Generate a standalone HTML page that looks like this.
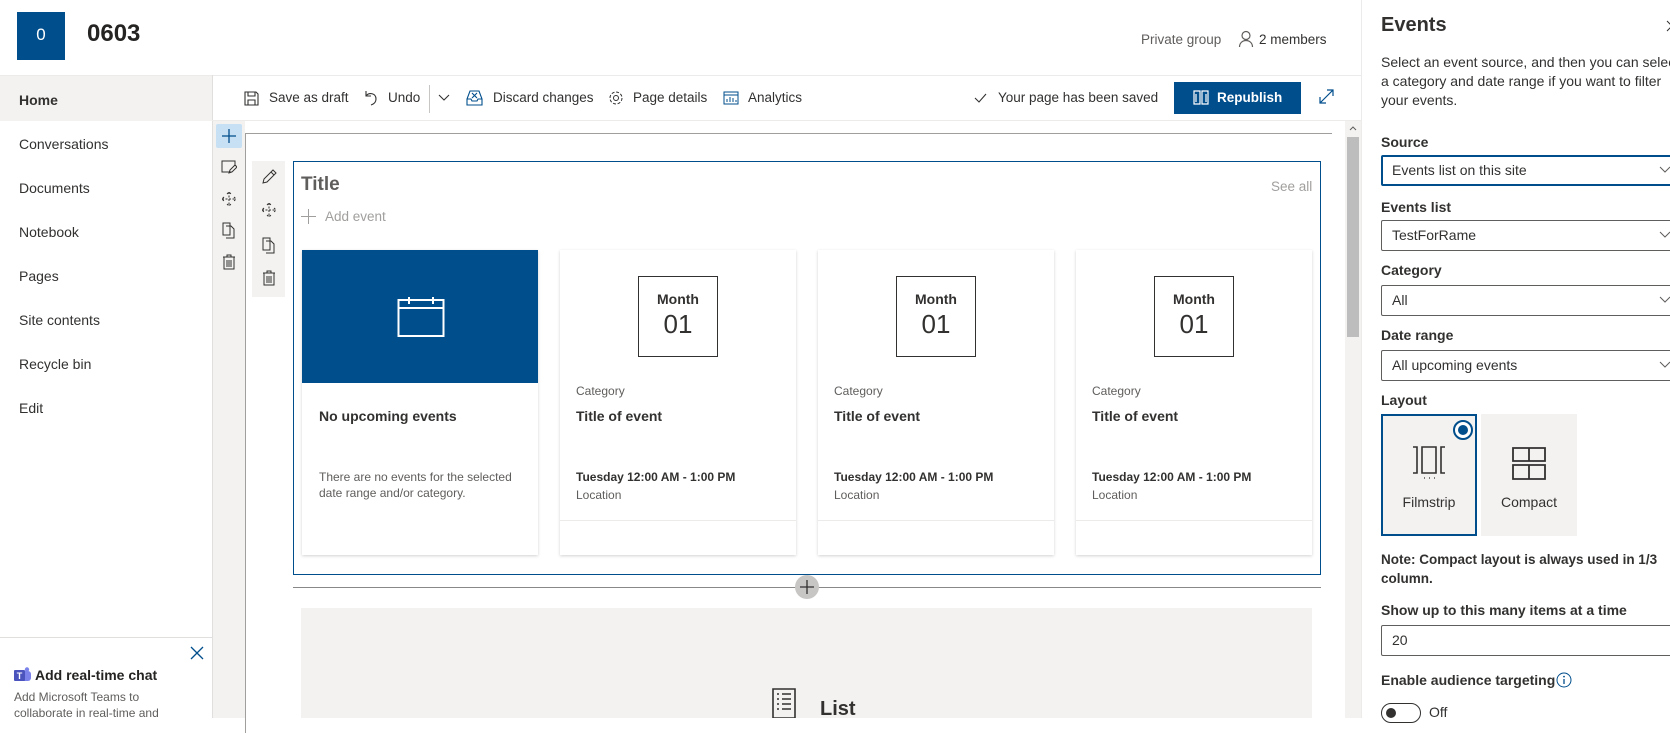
<!DOCTYPE html>
<html><head><meta charset="utf-8"><style>
*{box-sizing:border-box;margin:0;padding:0}
body{width:1670px;height:718px;overflow:hidden;background:#fff;font-family:"Liberation Sans",sans-serif;color:#323130;position:relative}
.a{position:absolute;white-space:nowrap}
.nav{font-size:14px;left:19px}
.tb{font-size:13.5px;top:90px}
.lbl{font-size:14px;font-weight:bold;left:1381px}
.dd{position:absolute;left:1381px;width:300px;height:31px;border:1px solid #605e5c;border-radius:2px;font-size:14px;padding:6px 10px}
.card{position:absolute;top:250px;width:236px;height:305px;background:#fff;box-shadow:0 1px 3px rgba(0,0,0,.18)}
.card .foot{position:absolute;left:0;right:0;top:270px;border-top:1px solid #edebe9}
.db{position:absolute;left:78px;top:26px;width:80px;height:81px;border:1px solid #323130;text-align:center}
.ic{position:absolute}
</style></head><body>
<div class="a" style="left:17px;top:12px;width:48px;height:48px;background:#004e8c;color:#fff;font-size:17px;text-align:center;line-height:46px">0</div>
<div class="a" style="left:87px;top:20px;font-size:24px;font-weight:bold;color:#252423">0603</div>
<div class="a" style="left:1141px;top:32px;font-size:13.5px;color:#605e5c">Private group</div>
<svg class="ic" style="left:1238px;top:30px" width="16" height="18" viewBox="0 0 16 18"><circle cx="8" cy="5.5" r="4" fill="none" stroke="#605e5c" stroke-width="1.2"/><path d="M1.5 17c0-4 3-6.5 6.5-6.5s6.5 2.5 6.5 6.5" fill="none" stroke="#605e5c" stroke-width="1.2"/></svg>
<div class="a" style="left:1259px;top:32px;font-size:13.5px;color:#323130">2 members</div>
<div class="a" style="left:0;top:75px;width:1361px;border-top:1px solid #edebe9"></div>
<div class="a" style="left:0;top:76px;width:212px;height:45px;background:#f3f2f1"></div>
<div class="a" style="left:212px;top:75px;height:643px;border-left:1px solid #e1dfdd"></div>
<div class="a nav" style="top:92px;font-weight:bold">Home</div>
<div class="a nav" style="top:136px">Conversations</div>
<div class="a nav" style="top:180px">Documents</div>
<div class="a nav" style="top:224px">Notebook</div>
<div class="a nav" style="top:268px">Pages</div>
<div class="a nav" style="top:312px">Site contents</div>
<div class="a nav" style="top:356px">Recycle bin</div>
<div class="a nav" style="top:400px">Edit</div>
<div class="a" style="left:0;top:637px;width:212px;border-top:1px solid #e1dfdd"></div>
<svg class="ic" style="left:190px;top:646px" width="14" height="14" viewBox="0 0 14 14"><path d="M1 1L13 13M13 1L1 13" stroke="#004e8c" stroke-width="1.3"/></svg>
<svg class="ic" style="left:13px;top:667px" width="20" height="18" viewBox="0 0 20 18"><rect x="8" y="4" width="10" height="10" rx="3" fill="#7b83eb"/><circle cx="14" cy="2.5" r="2.2" fill="#7b83eb"/><rect x="1" y="3" width="11" height="11" rx="1" fill="#4b53bc"/><text x="6.5" y="12" font-size="9" fill="#fff" text-anchor="middle" font-family="Liberation Sans" font-weight="bold">T</text></svg>
<div class="a" style="left:35px;top:667px;font-size:14px;font-weight:bold;color:#252423">Add real-time chat</div>
<div class="a" style="left:14px;top:690px;font-size:12px;color:#605e5c">Add Microsoft Teams to</div>
<div class="a" style="left:14px;top:706px;font-size:12px;color:#605e5c">collaborate in real-time and</div>
<div class="a" style="left:212px;top:120px;width:1149px;border-top:1px solid #edebe9"></div>
<svg class="ic" style="left:244px;top:91px" width="15" height="15" viewBox="0 0 15 15"><path d="M1 1h11l2 2v11H1z M4 1v4h7V1 M4 14V9h7v5" fill="none" stroke="#323130" stroke-width="1.1"/></svg>
<div class="a tb" style="left:269px">Save as draft</div>
<svg class="ic" style="left:364px;top:90px" width="14" height="16" viewBox="0 0 14 16"><path d="M2 1v5h5M2 6c3-4 10-3 10 3 0 3-2 5-5 6" fill="none" stroke="#323130" stroke-width="1.1"/></svg>
<div class="a tb" style="left:388px">Undo</div>
<div class="a" style="left:429px;top:85px;height:28px;border-left:1px solid #c8c6c4"></div>
<svg class="ic" style="left:438px;top:94px" width="12" height="8" viewBox="0 0 12 8"><path d="M1 1l5 5 5-5" fill="none" stroke="#323130" stroke-width="1.1"/></svg>
<svg class="ic" style="left:466px;top:90px" width="17" height="16" viewBox="0 0 17 16"><path d="M1 9v6h15V9l-3-8H4z M1 9h4l1 2h5l1-2h4 M6 3l5 5M11 3L6 8" fill="none" stroke="#004e8c" stroke-width="1.1"/></svg>
<div class="a tb" style="left:493px">Discard changes</div>
<svg class="ic" style="left:608px;top:90px" width="16" height="16" viewBox="0 0 16 16"><circle cx="8" cy="8" r="2.5" fill="none" stroke="#323130"/><circle cx="8" cy="8" r="6" fill="none" stroke="#323130" stroke-dasharray="3 1.7"/></svg>
<div class="a tb" style="left:633px">Page details</div>
<svg class="ic" style="left:723px;top:91px" width="16" height="14" viewBox="0 0 16 14"><rect x="1" y="1" width="14" height="12" fill="none" stroke="#004e8c"/><path d="M1 4h14M4 11V8M7 11V6M10 11V7M13 11V9" stroke="#004e8c"/></svg>
<div class="a tb" style="left:748px">Analytics</div>
<svg class="ic" style="left:974px;top:93px" width="13" height="10" viewBox="0 0 13 10"><path d="M1 5l4 4 7-8" fill="none" stroke="#323130" stroke-width="1.1"/></svg>
<div class="a tb" style="left:998px">Your page has been saved</div>
<div class="a" style="left:1174px;top:82px;width:127px;height:32px;background:#004e8c;color:#fff;font-size:13.5px;font-weight:bold;padding-left:43px;line-height:32px">Republish</div>
<svg class="ic" style="left:1193px;top:90px" width="16" height="15" viewBox="0 0 16 15"><path d="M1 1h6v13H1z M9 1h6v13H9z M3 4v8M13 4v8" fill="none" stroke="#fff" stroke-width="1.2"/></svg>
<svg class="ic" style="left:1318px;top:88px" width="17" height="17" viewBox="0 0 17 17"><path d="M2 15L15 2M9 2h6v6M2 9v6h6" fill="none" stroke="#004e8c" stroke-width="1.2"/></svg>
<div class="a" style="left:213px;top:121px;width:32px;height:597px;background:#f3f2f1"></div>
<div class="a" style="left:216px;top:124px;width:26px;height:24px;background:#c7e0f4;border-radius:2px"></div>
<svg class="ic" style="left:221px;top:128px" width="16" height="16" viewBox="0 0 16 16"><path d="M8 1v14M1 8h14" stroke="#004e8c" stroke-width="1.3"/></svg>
<svg class="ic" style="left:221px;top:160px" width="16" height="15" viewBox="0 0 16 15"><path d="M11 12H1V1h13v5 M8 13l1-3 5-5 2 2-5 5z" fill="none" stroke="#323130"/></svg>
<svg class="ic" style="left:221px;top:191px" width="16" height="16" viewBox="0 0 16 16"><path d="M8 1v14M1 8h14M6 3l2-2 2 2M6 13l2 2 2-2M3 6L1 8l2 2M13 6l2 2-2 2" fill="none" stroke="#323130" stroke-dasharray="2 1.5"/></svg>
<svg class="ic" style="left:222px;top:222px" width="14" height="17" viewBox="0 0 14 17"><path d="M1 1h7v12H1z M4 4h5l3 3v9H4" fill="none" stroke="#323130"/></svg>
<svg class="ic" style="left:222px;top:254px" width="14" height="16" viewBox="0 0 14 16"><path d="M1 3h12M5 3V1h4v2M2 3v12h10V3M5 6v7M7 6v7M9 6v7" fill="none" stroke="#323130"/></svg>
<div class="a" style="left:245px;top:133px;width:1087px;height:600px;border:1px solid #a19f9d;border-right:none;border-bottom:none"></div>
<div class="a" style="left:1345px;top:121px;width:16px;height:597px;background:#f3f2f1"></div>
<div class="a" style="left:1347px;top:137px;width:12px;height:200px;background:#bdbdbd"></div>
<svg class="ic" style="left:1349px;top:125px" width="8" height="6" viewBox="0 0 8 6"><path d="M1 5l3-3 3 3" fill="none" stroke="#605e5c"/></svg>
<div class="a" style="left:252px;top:161px;width:33px;height:136px;background:#f3f2f1"></div>
<svg class="ic" style="left:261px;top:169px" width="16" height="16" viewBox="0 0 16 16"><path d="M2 14l1-4 9-9 3 3-9 9z M10 3l3 3" fill="none" stroke="#323130"/></svg>
<svg class="ic" style="left:261px;top:202px" width="16" height="16" viewBox="0 0 16 16"><path d="M8 1v14M1 8h14M6 3l2-2 2 2M6 13l2 2 2-2M3 6L1 8l2 2M13 6l2 2-2 2" fill="none" stroke="#323130" stroke-dasharray="2 1.5"/></svg>
<svg class="ic" style="left:262px;top:237px" width="14" height="17" viewBox="0 0 14 17"><path d="M1 1h7v12H1z M4 4h5l3 3v9H4" fill="none" stroke="#323130"/></svg>
<svg class="ic" style="left:262px;top:270px" width="14" height="16" viewBox="0 0 14 16"><path d="M1 3h12M5 3V1h4v2M2 3v12h10V3M5 6v7M7 6v7M9 6v7" fill="none" stroke="#323130"/></svg>
<div class="a" style="left:293px;top:161px;width:1028px;height:414px;border:1px solid #004e8c"></div>
<div class="a" style="left:301px;top:174px;font-size:19px;font-weight:bold;color:#605e5c">Title</div>
<div class="a" style="left:1271px;top:179px;font-size:13.5px;color:#a19f9d">See all</div>
<svg class="ic" style="left:301px;top:209px" width="15" height="15" viewBox="0 0 15 15"><path d="M7.5 0v15M0 7.5h15" stroke="#a19f9d"/></svg>
<div class="a" style="left:325px;top:209px;font-size:13.5px;color:#a19f9d">Add event</div>
<div class="card" style="left:302px">
<div style="position:absolute;left:0;top:0;width:236px;height:133px;background:#004e8c"></div>
<svg class="ic" style="left:95px;top:46px" width="48" height="42" viewBox="0 0 48 42"><rect x="1.5" y="4" width="45" height="36" fill="none" stroke="#fff" stroke-width="2"/><path d="M1.5 12h45M12 1v7M36 1v7" stroke="#fff" stroke-width="2"/></svg>
<div class="a" style="left:17px;top:158px;font-size:14px;font-weight:bold">No upcoming events</div>
<div class="a" style="left:17px;top:220px;font-size:12px;color:#605e5c">There are no events for the selected</div>
<div class="a" style="left:17px;top:236px;font-size:12px;color:#605e5c">date range and/or category.</div>
</div>
<div class="card" style="left:560px"><div class="db"><div style="font-size:14px;font-weight:bold;margin-top:14px">Month</div><div style="font-size:26px;margin-top:2px">01</div></div><div class="a" style="left:16px;top:134px;font-size:12px;color:#605e5c">Category</div><div class="a" style="left:16px;top:158px;font-size:14px;font-weight:bold">Title of event</div><div class="a" style="left:16px;top:220px;font-size:12px;font-weight:bold">Tuesday 12:00 AM - 1:00 PM</div><div class="a" style="left:16px;top:238px;font-size:12px;color:#605e5c">Location</div><div class="foot"></div></div>
<div class="card" style="left:818px"><div class="db"><div style="font-size:14px;font-weight:bold;margin-top:14px">Month</div><div style="font-size:26px;margin-top:2px">01</div></div><div class="a" style="left:16px;top:134px;font-size:12px;color:#605e5c">Category</div><div class="a" style="left:16px;top:158px;font-size:14px;font-weight:bold">Title of event</div><div class="a" style="left:16px;top:220px;font-size:12px;font-weight:bold">Tuesday 12:00 AM - 1:00 PM</div><div class="a" style="left:16px;top:238px;font-size:12px;color:#605e5c">Location</div><div class="foot"></div></div>
<div class="card" style="left:1076px"><div class="db"><div style="font-size:14px;font-weight:bold;margin-top:14px">Month</div><div style="font-size:26px;margin-top:2px">01</div></div><div class="a" style="left:16px;top:134px;font-size:12px;color:#605e5c">Category</div><div class="a" style="left:16px;top:158px;font-size:14px;font-weight:bold">Title of event</div><div class="a" style="left:16px;top:220px;font-size:12px;font-weight:bold">Tuesday 12:00 AM - 1:00 PM</div><div class="a" style="left:16px;top:238px;font-size:12px;color:#605e5c">Location</div><div class="foot"></div></div>
<div class="a" style="left:293px;top:587px;width:1028px;border-top:1px solid #8a8886"></div>
<div class="a" style="left:795px;top:575px;width:24px;height:24px;border-radius:50%;background:#c8c6c4"></div>
<svg class="ic" style="left:800px;top:580px" width="14" height="14" viewBox="0 0 14 14"><path d="M7 0v14M0 7h14" stroke="#323130" stroke-width="1.3"/></svg>
<div class="a" style="left:301px;top:608px;width:1011px;height:110px;background:#f3f2f1"></div>
<svg class="ic" style="left:772px;top:688px" width="24" height="30" viewBox="0 0 24 30"><path d="M1 1h22v29H1z M5 6h2M10 6h9M5 11h2M10 11h9M5 16h2M10 16h9M5 21h2M10 21h9" fill="none" stroke="#323130" stroke-width="1.6"/></svg>
<div class="a" style="left:820px;top:698px;font-size:20px;font-weight:bold;color:#323130">List</div>
<div class="a" style="left:1361px;top:0;height:718px;border-left:1px solid #edebe9"></div>
<div class="a" style="left:1381px;top:14px;font-size:20px;font-weight:bold;color:#323130">Events</div>
<svg class="ic" style="left:1666px;top:20px" width="10" height="12" viewBox="0 0 10 12"><path d="M1 1l10 10M11 1L1 11" stroke="#323130"/></svg>
<div class="a" style="left:1381px;top:53px;font-size:14px;line-height:19px;color:#323130">Select an event source, and then you can select<br>a category and date range if you want to filter<br>your events.</div>
<div class="a lbl" style="top:134px">Source</div>
<div class="dd" style="top:155px;border:2px solid #004e8c;padding:5px 9px">Events list on this site</div>
<div class="a lbl" style="top:199px">Events list</div>
<div class="dd" style="top:220px">TestForRame</div>
<div class="a lbl" style="top:262px">Category</div>
<div class="dd" style="top:285px">All</div>
<div class="a lbl" style="top:327px">Date range</div>
<div class="dd" style="top:350px">All upcoming events</div>
<svg class="ic" style="left:1659px;top:166px" width="12" height="8" viewBox="0 0 12 8"><path d="M1 1l5 5 5-5" fill="none" stroke="#605e5c"/></svg>
<svg class="ic" style="left:1659px;top:231px" width="12" height="8" viewBox="0 0 12 8"><path d="M1 1l5 5 5-5" fill="none" stroke="#605e5c"/></svg>
<svg class="ic" style="left:1659px;top:296px" width="12" height="8" viewBox="0 0 12 8"><path d="M1 1l5 5 5-5" fill="none" stroke="#605e5c"/></svg>
<svg class="ic" style="left:1659px;top:361px" width="12" height="8" viewBox="0 0 12 8"><path d="M1 1l5 5 5-5" fill="none" stroke="#605e5c"/></svg>
<div class="a lbl" style="top:392px">Layout</div>
<div class="a" style="left:1381px;top:414px;width:96px;height:122px;background:#f3f2f1;border:2px solid #004e8c"></div>
<div class="a" style="left:1453px;top:420px;width:20px;height:20px;border-radius:50%;border:2px solid #004e8c;background:#fff"></div>
<div class="a" style="left:1458px;top:425px;width:10px;height:10px;border-radius:50%;background:#004e8c"></div>
<svg class="ic" style="left:1412px;top:446px" width="34" height="34" viewBox="0 0 34 34"><path d="M1 1h4v26H1 M33 1h-4v26h4 M10 1h14v26H10z" fill="none" stroke="#323130" stroke-width="1.6"/><path d="M12 32h1M17 32h1M22 32h1" stroke="#323130" stroke-width="1.2"/></svg>
<div class="a" style="left:1381px;top:494px;width:96px;text-align:center;font-size:14px">Filmstrip</div>
<div class="a" style="left:1481px;top:414px;width:96px;height:122px;background:#f3f2f1"></div>
<svg class="ic" style="left:1512px;top:447px" width="34" height="33" viewBox="0 0 34 33"><path d="M1 1h32v13H1z M1 18h32v14H1z M17 1v13M17 18v14" fill="none" stroke="#323130" stroke-width="1.8"/></svg>
<div class="a" style="left:1481px;top:494px;width:96px;text-align:center;font-size:14px">Compact</div>
<div class="a" style="left:1381px;top:550px;font-size:13.5px;font-weight:bold;line-height:19px">Note: Compact layout is always used in 1/3<br>column.</div>
<div class="a lbl" style="top:602px">Show up to this many items at a time</div>
<div class="dd" style="top:625px;height:31px">20</div>
<div class="a lbl" style="top:672px">Enable audience targeting</div>
<svg class="ic" style="left:1556px;top:672px" width="16" height="16" viewBox="0 0 16 16"><circle cx="8" cy="8" r="7" fill="none" stroke="#004e8c"/><path d="M8 7v5" stroke="#004e8c" stroke-width="1.3"/><circle cx="8" cy="4.6" r=".9" fill="#004e8c"/></svg>
<div class="a" style="left:1381px;top:703px;width:40px;height:20px;border-radius:10px;border:1px solid #323130"></div>
<div class="a" style="left:1386px;top:708px;width:10px;height:10px;border-radius:50%;background:#323130"></div>
<div class="a" style="left:1429px;top:704px;font-size:14px">Off</div>
</body></html>
